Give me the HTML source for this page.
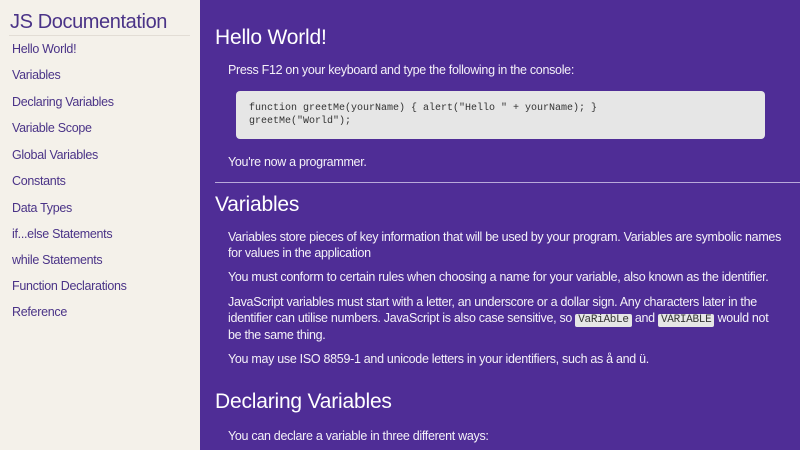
<!DOCTYPE html>
<html><head><meta charset="utf-8"><style>
*{margin:0;padding:0;box-sizing:border-box}
body{width:800px;height:450px;overflow:hidden;font-family:"Liberation Sans",sans-serif;background:#4f2d96;position:relative}
#nav{position:absolute;left:0;top:0;width:200px;height:450px;background:#f4f1ea;color:#4a3387}
#nav h2{font-weight:normal;font-size:20px;position:absolute;left:10px;top:11px;letter-spacing:-0.4px}
#nav .rule{position:absolute;left:9px;top:35px;width:181px;height:1px;background:#e2ddd5}
#nav a{position:absolute;left:12px;font-size:12.5px;color:#4a3387;text-decoration:none;letter-spacing:-0.3px}
#main{position:absolute;left:200px;top:0;width:600px;height:450px;color:#fff}
h1{position:absolute;left:15px;font-weight:normal;font-size:21px;letter-spacing:-0.2px}
p{position:absolute;left:28px;width:550px;font-size:12.5px;line-height:16px;letter-spacing:-0.3px;color:#f4f1f8}
.code{position:absolute;left:36px;top:91px;width:529px;height:48px;background:#e6e6e6;border-radius:4px;font-family:"Liberation Mono",monospace;font-size:10px;color:#333;padding:11px 13px;line-height:13px}
hr{position:absolute;left:15px;top:182px;width:585px;border:0;height:1px;background:#b9a9da}
code{background:#e6e6e6;color:#333;font-family:"Liberation Mono",monospace;font-size:11px;line-height:11px;padding:1px 3px;border-radius:2px;display:inline-block}
</style></head><body>
<div id="nav"><h2>JS Documentation</h2><div class="rule"></div>
<a style="top:42px">Hello World!</a>
<a style="top:68px">Variables</a>
<a style="top:95px">Declaring Variables</a>
<a style="top:121px">Variable Scope</a>
<a style="top:148px">Global Variables</a>
<a style="top:174px">Constants</a>
<a style="top:201px">Data Types</a>
<a style="top:227px">if...else Statements</a>
<a style="top:253px">while Statements</a>
<a style="top:279px">Function Declarations</a>
<a style="top:305px">Reference</a>
</div>
<div id="main">
<h1 style="top:26px">Hello World!</h1>
<p style="top:62px">Press F12 on your keyboard and type the following in the console:</p>
<div class="code">function greetMe(yourName) { alert("Hello " + yourName); }<br>greetMe("World");</div>
<p style="top:154px">You're now a programmer.</p>
<hr>
<h1 style="top:193px">Variables</h1>
<p style="top:229px;width:565px">Variables store pieces of key information that will be used by your program. Variables are symbolic names for values in the application</p>
<p style="top:269px">You must conform to certain rules when choosing a name for your variable, also known as the identifier.</p>
<p style="top:294px">JavaScript variables must start with a letter, an underscore or a dollar sign. Any characters later in the identifier can utilise numbers. JavaScript is also case sensitive, so <code>VaRiAbLe</code> and <code>VARIABLE</code> would not be the same thing.</p>
<p style="top:351px">You may use ISO 8859-1 and unicode letters in your identifiers, such as å and ü.</p>
<h1 style="top:390px">Declaring Variables</h1>
<p style="top:428px">You can declare a variable in three different ways:</p>
</div>
</body></html>
